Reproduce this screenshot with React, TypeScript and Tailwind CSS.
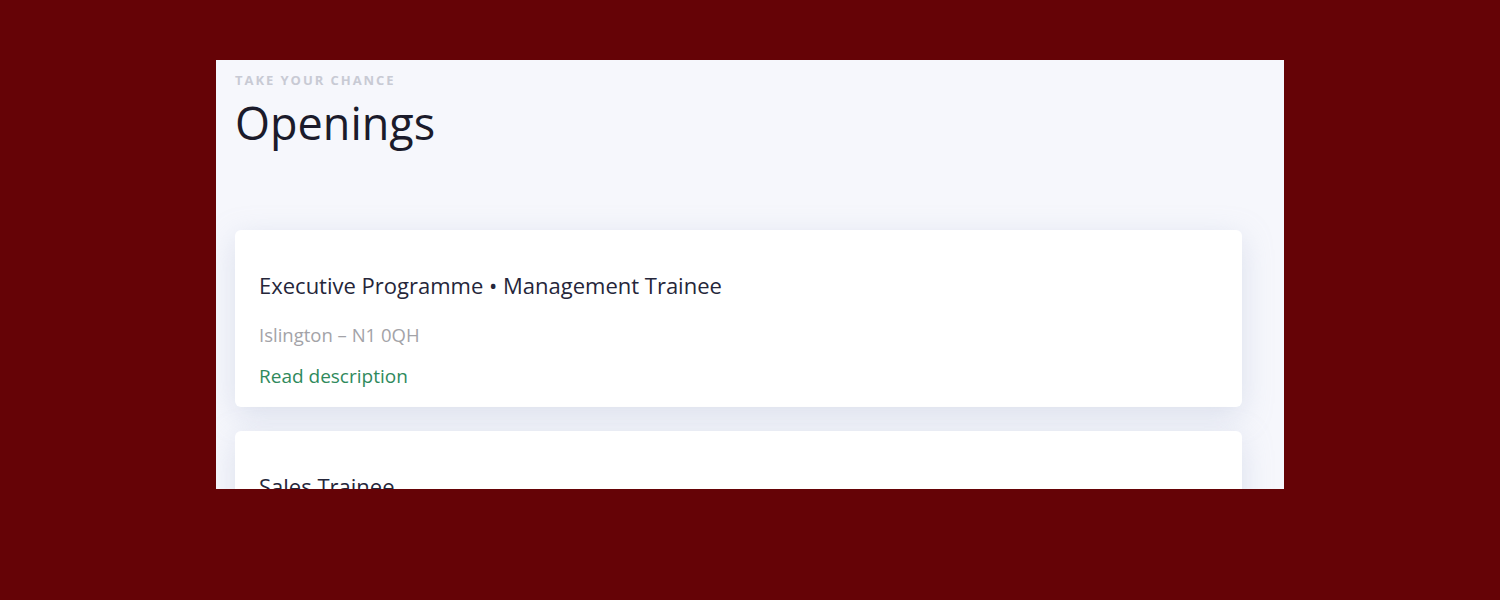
import React from 'react';

type Opening = { title: string; location: string };

const openings: Opening[] = [
  { title: 'Executive Programme • Management Trainee', location: 'Islington – N1 0QH' },
  { title: 'Sales Trainee', location: 'Islington – N1 0QH' },
];

const OpeningCard: React.FC<{ item: Opening }> = ({ item }) => (
  <div className="rounded-md bg-white px-6 pt-[40px] pb-[16px] shadow-[0_8px_30px_rgba(170,180,210,0.35)]">
    <h3 className="text-[22px] leading-[30px] text-[#25263a]">{item.title}</h3>
    <p className="mt-[20px] text-[18.5px] leading-[30px] text-[#a3a3a8]">{item.location}</p>
    <a className="mt-[11px] block text-[19px] leading-[30px] text-[#2f8a5c]">Read description</a>
  </div>
);

export default function App() {
  return (
    <div
      className="flex h-[600px] w-full justify-center bg-[#650306] pt-[60px]"
      style={{ fontFamily: '"Open Sans", "Liberation Sans", sans-serif' }}
    >
      <div className="h-[429px] w-[1068px] overflow-hidden bg-[#f6f7fc]">
        <div className="pl-[19px] pr-[42px]">
          <p className="pt-[11px] text-[13px] font-bold leading-[18px] tracking-[0.15em] text-[#c8cad4]">
            TAKE YOUR CHANCE
          </p>
          <h1 className="mt-[6px] text-[45px] leading-[56px] text-[#1b1b2b]">Openings</h1>
          <div className="mt-[79px] flex flex-col gap-6">
            {openings.map((o) => (
              <OpeningCard key={o.title} item={o} />
            ))}
          </div>
        </div>
      </div>
    </div>
  );
}
